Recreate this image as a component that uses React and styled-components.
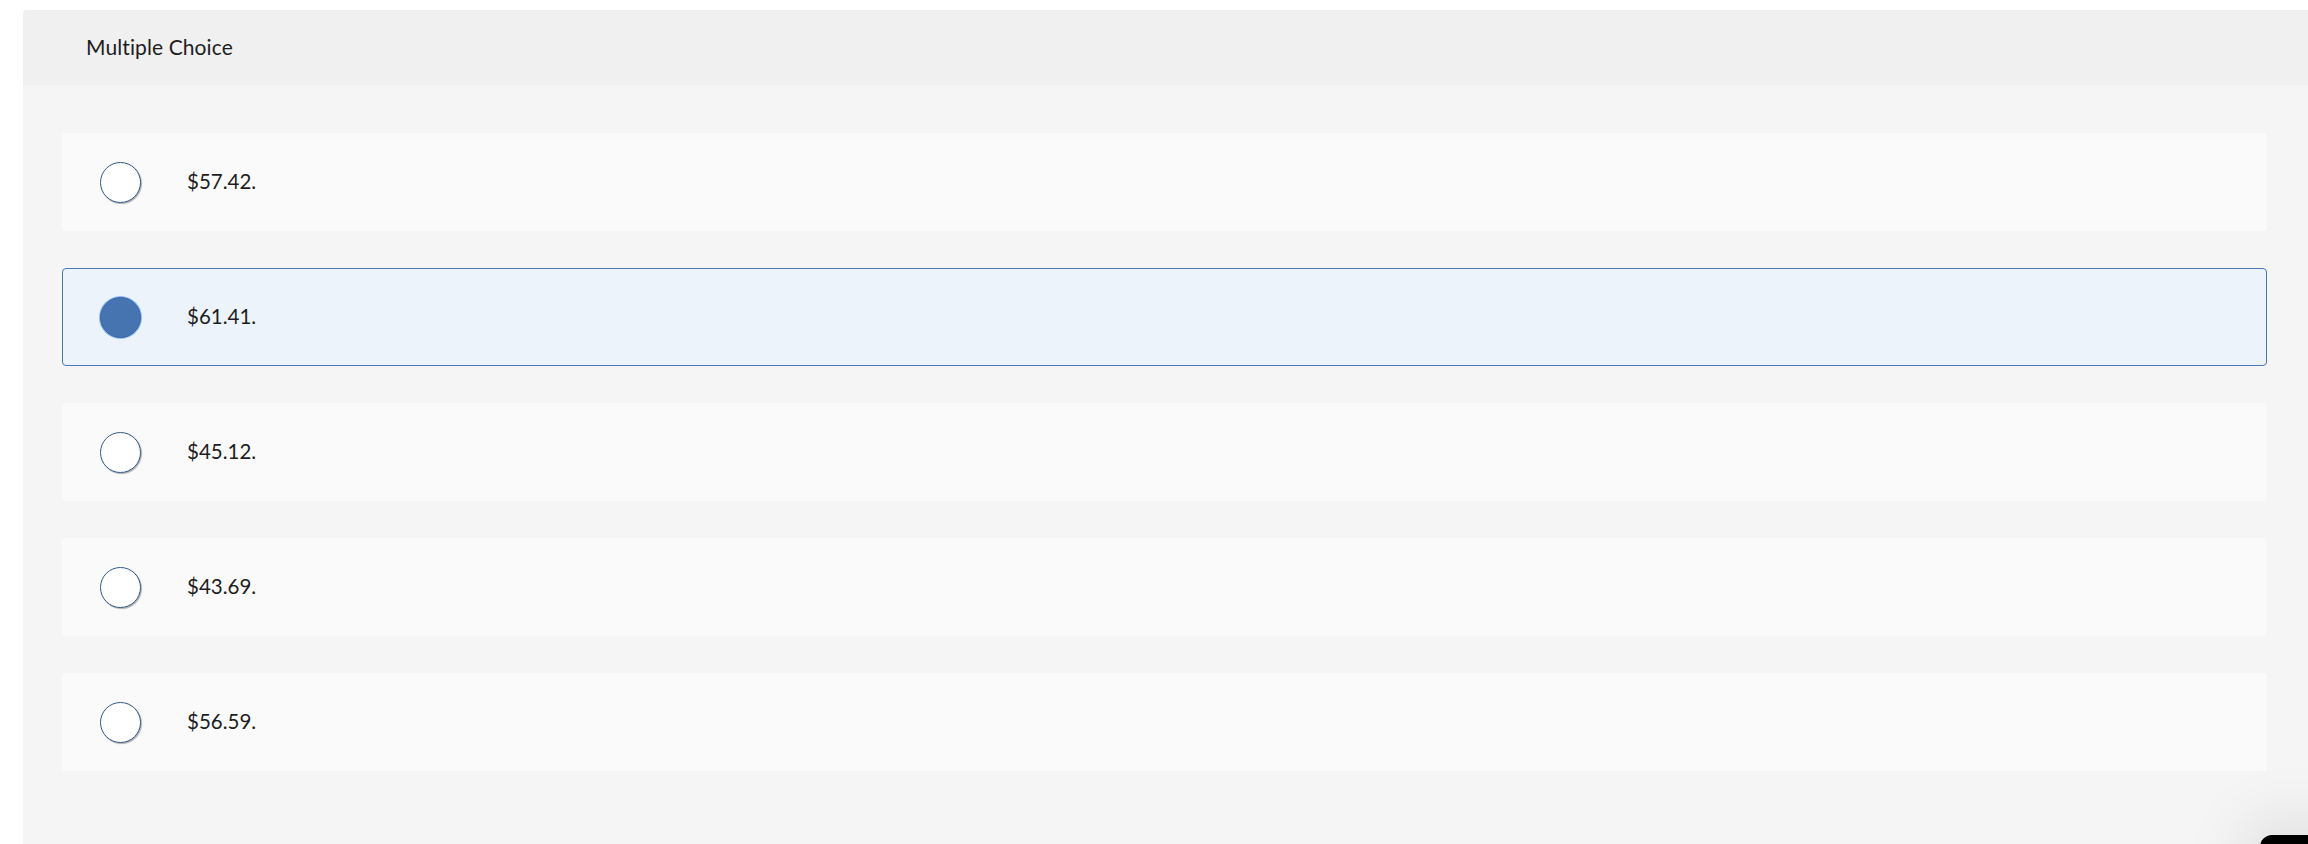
import React, { useState } from "react";
import styled, { createGlobalStyle } from "styled-components";

const options = ["$57.42.", "$61.41.", "$45.12.", "$43.69.", "$56.59."];

const GlobalStyle = createGlobalStyle`
  html, body {
    margin: 0;
    padding: 0;
    background: #ffffff;
    font-family: Lato, "Open Sans", sans-serif;
    overflow: hidden;
  }
`;

const App = () => {
  const [selected, setSelected] = useState(1);

  return (
    <Page>
      <GlobalStyle />
      <Card>
        <Header>
          <Title>Multiple Choice</Title>
        </Header>
        <Body>
          {options.map((label, index) => (
            <Option
              key={label}
              $active={selected === index}
              onClick={() => setSelected(index)}
            >
              <Radio $active={selected === index} />
              <Label>{label}</Label>
            </Option>
          ))}
        </Body>
      </Card>
      <FloatingButton />
    </Page>
  );
};

const Page = styled.div`
  padding: 10px 0 0 23px;
  height: 880px;
  box-sizing: border-box;
`;

const Card = styled.div`
  background-color: #f5f5f5;
  border-radius: 4px 0 0 0;
  height: 100%;
  overflow: hidden;
`;

const Header = styled.div`
  height: 75px;
  background-color: #f0f0f0;
  display: flex;
  align-items: center;
  padding-left: 63px;
`;

const Title = styled.h2`
  margin: 0 0 2px;
  font-size: 21px;
  font-weight: 400;
  color: #1e1e1e;
  letter-spacing: 0.1px;
`;

const Body = styled.div`
  display: flex;
  flex-direction: column;
  gap: 37px;
  padding: 48px 41px 0 39px;
`;

const Option = styled.div`
  height: 98px;
  box-sizing: border-box;
  display: flex;
  align-items: center;
  padding-left: 37px;
  border-radius: 4px;
  cursor: pointer;
  background-color: ${(p) => (p.$active ? "#ecf3fb" : "#fafafa")};
  border: 1px solid ${(p) => (p.$active ? "#4a78b8" : "transparent")};
`;

const Radio = styled.span`
  width: 41px;
  height: 41px;
  box-sizing: border-box;
  border-radius: 50%;
  flex-shrink: 0;
  background-color: ${(p) => (p.$active ? "#4574b0" : "#ffffff")};
  border: 1.5px solid ${(p) => (p.$active ? "#3a66a3" : "#35598a")};
  box-shadow: ${(p) =>
    p.$active
      ? "0 0 0 1px rgba(70, 140, 240, 0.55)"
      : "1px 1px 1px rgba(0, 0, 0, 0.3)"};
`;

const Label = styled.span`
  margin: 0 0 2px 46px;
  font-size: 20.5px;
  color: #1e1e1e;
`;

const FloatingButton = styled.div`
  position: fixed;
  left: 2260px;
  top: 835px;
  width: 80px;
  height: 60px;
  border-radius: 12px;
  background-color: #000;
  box-shadow: 0 0 60px 20px rgba(0, 0, 0, 0.08);
`;

export default App;
